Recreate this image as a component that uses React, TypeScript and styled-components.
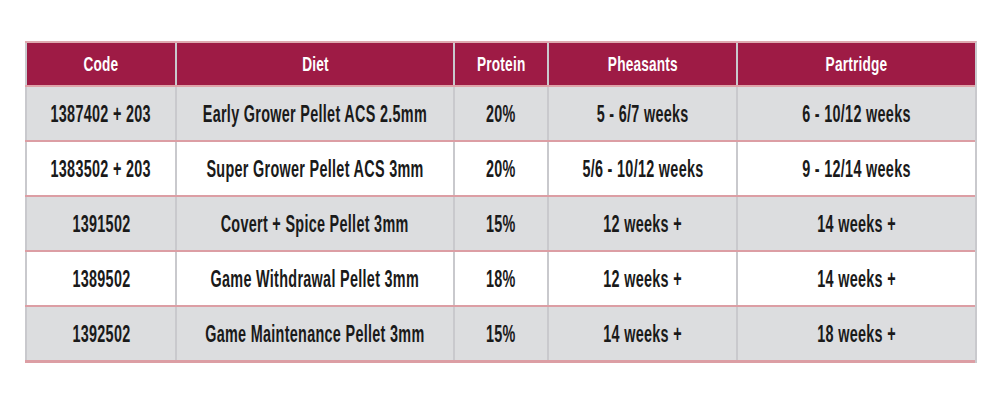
import React from "react";
import styled, { createGlobalStyle } from "styled-components";

type Row = {
  code: string;
  diet: string;
  protein: string;
  pheasants: string;
  partridge: string;
};

const rows: Row[] = [
  { code: "1387402 + 203", diet: "Early Grower Pellet ACS 2.5mm", protein: "20%", pheasants: "5 - 6/7 weeks", partridge: "6 - 10/12 weeks" },
  { code: "1383502 + 203", diet: "Super Grower Pellet ACS 3mm", protein: "20%", pheasants: "5/6 - 10/12 weeks", partridge: "9 - 12/14 weeks" },
  { code: "1391502", diet: "Covert + Spice Pellet 3mm", protein: "15%", pheasants: "12 weeks +", partridge: "14 weeks +" },
  { code: "1389502", diet: "Game Withdrawal Pellet 3mm", protein: "18%", pheasants: "12 weeks +", partridge: "14 weeks +" },
  { code: "1392502", diet: "Game Maintenance Pellet 3mm", protein: "15%", pheasants: "14 weeks +", partridge: "18 weeks +" },
];

const headings = ["Code", "Diet", "Protein", "Pheasants", "Partridge"];

const App: React.FC = () => {
  return (
    <>
      <GlobalStyle />
      <Page>
        <Table>
          <HeadRow>
            {headings.map((h) => (
              <Cell key={h}>
                <HeadText>{h}</HeadText>
              </Cell>
            ))}
          </HeadRow>
          {rows.map((r, i) => (
            <BodyRow key={r.code} $shaded={i % 2 === 0}>
              {[r.code, r.diet, r.protein, r.pheasants, r.partridge].map((v, j) => (
                <Cell key={j}>
                  <CellText>{v}</CellText>
                </Cell>
              ))}
            </BodyRow>
          ))}
        </Table>
      </Page>
    </>
  );
};

const GlobalStyle = createGlobalStyle`
  body {
    margin: 0;
    background: #ffffff;
    font-family: "Liberation Sans", Arial, sans-serif;
  }
`;

const Page = styled.div`
  width: 1000px;
  height: 401px;
  padding: 41px 0 0 25px;
  box-sizing: border-box;
`;

const Table = styled.div`
  width: 950px;
  border-top: 2px solid #dfaab0;
  border-right: 2px solid #c9c9cd;
  & > div:last-child {
    border-bottom-width: 3px;
  }
`;

const columns = "150px 278px 94px 189px 239px";

const HeadRow = styled.div`
  display: grid;
  grid-template-columns: ${columns};
  height: 42px;
  background: #9e1b45;
  border-bottom: 2px solid #dfa2a8;
`;

const BodyRow = styled.div<{ $shaded: boolean }>`
  display: grid;
  grid-template-columns: ${columns};
  height: 53px;
  background: ${(p) => (p.$shaded ? "#dcdddf" : "#ffffff")};
  border-bottom: 2px solid #dc9ea4;
`;

const Cell = styled.div`
  display: flex;
  align-items: center;
  justify-content: center;
  border-left: 2px solid #c9c9cd;
  overflow: hidden;
`;

const HeadText = styled.span`
  display: inline-block;
  white-space: nowrap;
  color: #ffffff;
  font-weight: 700;
  font-size: 21px;
  letter-spacing: 0.3px;
  transform: scaleX(0.65);
`;

const CellText = styled.span`
  display: inline-block;
  white-space: nowrap;
  color: #1a1a1a;
  font-weight: 700;
  font-size: 24px;
  letter-spacing: 0.5px;
  transform: scaleX(0.6);
`;

export default App;
